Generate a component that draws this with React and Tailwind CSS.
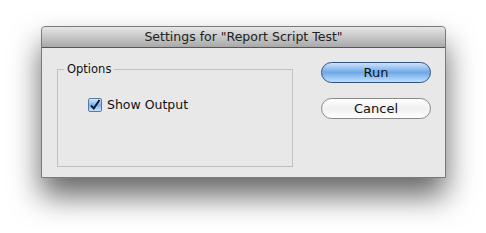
export default function App() {
  const font = { fontFamily: '"Lucida Grande", "DejaVu Sans", sans-serif' };
  return (
    <div className="w-[486px] h-[233px] bg-white pt-[26px] pl-[41px]" style={font}>
      <div className="w-[405px] h-[152px] bg-[#e8e8e8] border border-[#7a7a7a] rounded-t-[4px] shadow-[0_18px_30px_rgba(0,0,0,0.6)] flex flex-col">
        {/* title bar */}
        <div className="h-[21px] rounded-t-[4px] bg-gradient-to-b from-[#e6e6e6] to-[#a9a9a9] border-b border-[#565656] flex items-center justify-center">
          <span className="text-[12.5px] text-[#222] leading-none">Settings for "Report Script Test"</span>
        </div>
        <div className="flex flex-1 pl-[15px] pr-[14px]">
          {/* group box */}
          <div className="relative mt-[21px] w-[236px] h-[98px] border border-[#c0c0c0]">
            <span className="absolute -top-[8px] left-[6px] px-[3px] bg-[#e8e8e8] text-[11.5px] leading-[14px] text-[#111]">Options</span>
            <div className="flex items-center gap-[5px] ml-[30px] mt-[26px]">
              <div className="w-[14px] h-[14px] rounded-[2px] border border-[#5a7aa6] bg-gradient-to-b from-[#d4e8fb] via-[#7fb3ea] to-[#c8e4fd] flex items-center justify-center">
                <svg width="12" height="12" viewBox="0 0 12 12">
                  <path d="M2 6.5 L4.8 9.5 L10.5 1" fill="none" stroke="#0f1d33" strokeWidth="2" />
                </svg>
              </div>
              <span className="text-[12.5px] text-[#111]">Show Output</span>
            </div>
          </div>
          <div className="ml-auto mt-[14px] flex flex-col gap-[15px]">
            <button className="w-[110px] h-[21px] rounded-full border border-[#31517f] bg-gradient-to-b from-[#cde3fa] via-[#6ea8e6] to-[#bfe0fe] text-[13px] text-[#111] leading-none">
              Run
            </button>
            <button className="w-[110px] h-[21px] rounded-full border border-[#8a8a8a] bg-gradient-to-b from-[#ffffff] via-[#f0f0f0] to-[#ffffff] text-[13px] text-[#111] leading-none">
              Cancel
            </button>
          </div>
        </div>
      </div>
    </div>
  );
}
